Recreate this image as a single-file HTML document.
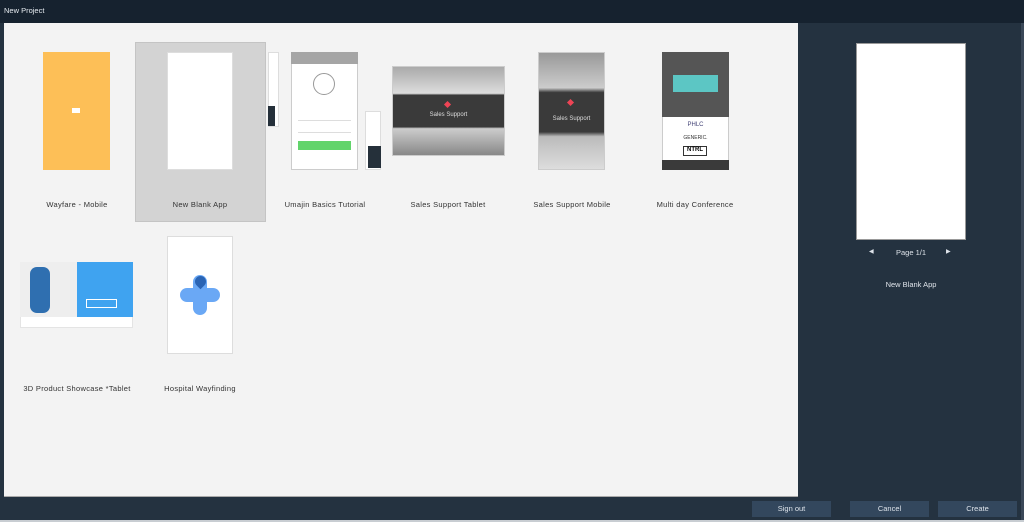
<!DOCTYPE html>
<html><head><meta charset="utf-8"><style>
*{margin:0;padding:0;box-sizing:border-box}
body{width:1024px;height:522px;background:#243240;font-family:"Liberation Sans",sans-serif;position:relative;overflow:hidden}
.a{position:absolute}
.lbl{position:absolute;font-size:7.5px;color:#333;text-align:center;width:140px;letter-spacing:0.3px}
.btn{position:absolute;top:501px;height:16px;background:#33475d;color:#dde3ea;font-size:7.5px;text-align:center;line-height:16px}
</style></head><body>
<div class="a" style="left:0;top:0;width:1024px;height:23px;background:#16222f"></div>
<div class="a" style="left:4px;top:6px;color:#e6ebf0;font-size:7.5px">New Project</div>
<div class="a" style="left:0;top:23px;width:1024px;height:497px;background:#243240"></div>
<div class="a" style="left:1021px;top:23px;width:3px;height:497px;background:#3a4858"></div>
<div class="a" style="left:0;top:520px;width:1024px;height:2px;background:#c8cdd2"></div>
<div class="a" style="left:4px;top:23px;width:794px;height:474px;background:#f3f3f3;border-bottom:1px solid #aaa"></div>

<div class="a" style="left:135px;top:42px;width:131px;height:180px;background:#d3d3d3;border:1px solid #c4c4c4"></div>

<div class="a" style="left:43px;top:52px;width:67px;height:118px;background:#fdbf57"></div>
<div class="a" style="left:72px;top:108px;width:8px;height:5px;background:#fff"></div>
<div class="a" style="left:167px;top:52px;width:66px;height:118px;background:#fff;border:1px solid #ddd"></div>
<div class="a" style="left:268px;top:52px;width:11px;height:75px;background:#fff;border:1px solid #ddd"></div>
<div class="a" style="left:268px;top:106px;width:7px;height:20px;background:#25303a"></div>
<div class="a" style="left:291px;top:52px;width:67px;height:118px;background:#fff;border:1px solid #ccc"></div>
<div class="a" style="left:291px;top:52px;width:67px;height:12px;background:#a5a5a5"></div>
<div class="a" style="left:313px;top:73px;width:22px;height:22px;border:1.5px solid #999;border-radius:50%"></div>
<div class="a" style="left:298px;top:120px;width:53px;height:1px;background:#ddd"></div>
<div class="a" style="left:298px;top:132px;width:53px;height:1px;background:#ddd"></div>
<div class="a" style="left:298px;top:141px;width:53px;height:9px;background:#62d46b"></div>
<div class="a" style="left:365px;top:111px;width:16px;height:59px;background:#fff;border:1px solid #ddd"></div>
<div class="a" style="left:368px;top:146px;width:13px;height:22px;background:#25303a"></div>
<div class="a" style="left:392px;top:66px;width:113px;height:90px;background:linear-gradient(#aaa,#ddd 30%,#3a3a3a 32%,#3a3a3a 68%,#ccc 70%,#888);border:1px solid #ccc"></div>
<div class="a" style="left:392px;top:112px;width:113px;text-align:center;color:#ddd;font-size:6px">Sales Support</div>
<div class="a" style="left:445px;top:102px;width:5px;height:5px;background:#e45;transform:rotate(45deg)"></div>
<div class="a" style="left:538px;top:52px;width:67px;height:118px;background:linear-gradient(#999,#ccc 30%,#3a3a3a 34%,#3a3a3a 68%,#bbb 72%,#ddd);border:1px solid #ccc"></div>
<div class="a" style="left:538px;top:116px;width:67px;text-align:center;color:#ddd;font-size:6px">Sales Support</div>
<div class="a" style="left:568px;top:100px;width:5px;height:5px;background:#e45;transform:rotate(45deg)"></div>
<div class="a" style="left:662px;top:52px;width:67px;height:118px;background:#fff;border:1px solid #ccc"></div>
<div class="a" style="left:662px;top:52px;width:67px;height:65px;background:#555"></div>
<div class="a" style="left:673px;top:75px;width:45px;height:17px;background:#5cc6c4"></div>
<div class="a" style="left:662px;top:160px;width:67px;height:10px;background:#3a3a3a"></div>
<div class="a" style="left:662px;top:122px;width:67px;text-align:center;font-size:6px;color:#447">PHLC</div>
<div class="a" style="left:662px;top:135px;width:67px;text-align:center;font-size:5px;color:#333">GENERIC.</div>
<div class="a" style="left:683px;top:146px;width:24px;height:10px;border:1px solid #333;font-size:6px;text-align:center;font-weight:bold">NTRL</div>
<div class="a" style="left:20px;top:262px;width:113px;height:66px;background:#fff;border:1px solid #e4e4e4"></div>
<div class="a" style="left:20px;top:262px;width:57px;height:55px;background:#eee"></div>
<div class="a" style="left:77px;top:262px;width:56px;height:55px;background:#3fa3f0"></div>
<div class="a" style="left:30px;top:267px;width:20px;height:46px;background:#2f6fb0;border-radius:7px"></div>
<div class="a" style="left:86px;top:299px;width:31px;height:9px;border:1px solid #fff"></div>
<div class="a" style="left:167px;top:236px;width:66px;height:118px;background:#fff;border:1px solid #ddd"></div>
<div class="a" style="left:180px;top:288px;width:40px;height:14px;background:#6aa8f5;border-radius:7px"></div>
<div class="a" style="left:193px;top:275px;width:14px;height:40px;background:#6aa8f5;border-radius:7px"></div>
<div class="a" style="left:195px;top:276px;width:11px;height:11px;background:#2a64b4;border-radius:50% 50% 50% 0;transform:rotate(-45deg)"></div>

<div class="lbl" style="left:7px;top:200px">Wayfare - Mobile</div>
<div class="lbl" style="left:130px;top:200px">New Blank App</div>
<div class="lbl" style="left:255px;top:200px">Umajin Basics Tutorial</div>
<div class="lbl" style="left:378px;top:200px">Sales Support Tablet</div>
<div class="lbl" style="left:502px;top:200px">Sales Support Mobile</div>
<div class="lbl" style="left:625px;top:200px">Multi day Conference</div>
<div class="lbl" style="left:7px;top:384px">3D Product Showcase *Tablet</div>
<div class="lbl" style="left:130px;top:384px">Hospital Wayfinding</div>

<div class="a" style="left:856px;top:43px;width:110px;height:197px;background:#fff;border:1px solid #999"></div>
<div class="a" style="left:869px;top:248px;color:#dfe4ea;font-size:6px">◀</div>
<div class="a" style="left:946px;top:248px;color:#dfe4ea;font-size:6px">▶</div>
<div class="a" style="left:861px;top:248px;width:100px;text-align:center;color:#dfe4ea;font-size:7.5px">Page 1/1</div>
<div class="a" style="left:861px;top:280px;width:100px;text-align:center;color:#dfe4ea;font-size:7.5px">New Blank App</div>

<div class="btn" style="left:752px;width:79px">Sign out</div>
<div class="btn" style="left:850px;width:79px">Cancel</div>
<div class="btn" style="left:938px;width:79px">Create</div>
</body></html>
